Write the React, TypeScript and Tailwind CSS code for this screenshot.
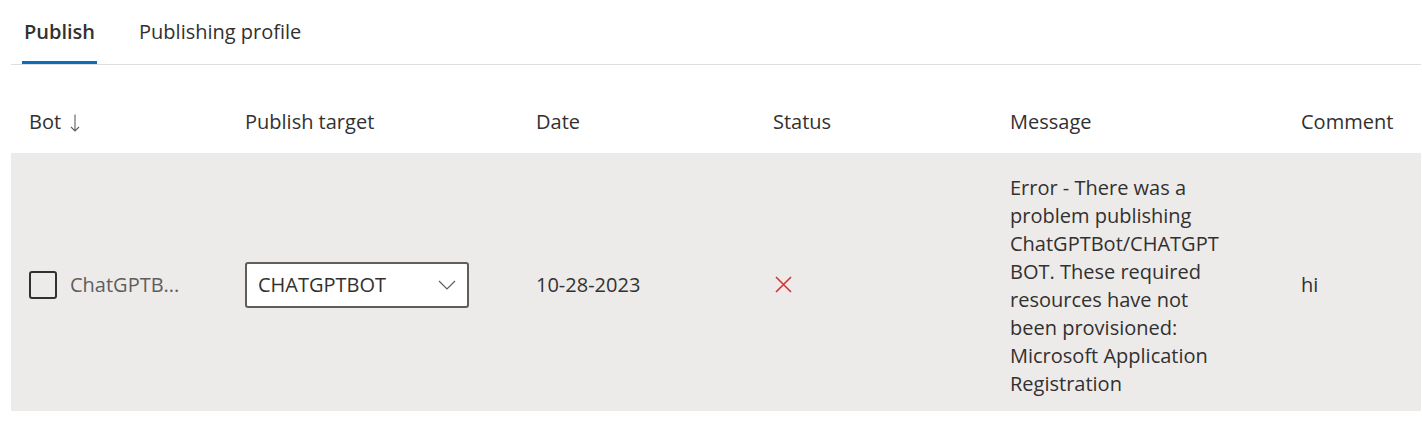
import React from 'react';

const font = { fontFamily: '"Open Sans", "Noto Sans", Arial, sans-serif' };

const cols = 'grid grid-cols-[216px_291px_237px_237px_291px_1fr]';

export default function App() {
  return (
    <div className="w-[1422px] h-[426px] bg-white text-[#323130]" style={font}>
      {/* Tabs */}
      <div className="ml-[11px] mr-px h-[65px] flex items-stretch border-b border-[#e1dfdd]">
        <div className="ml-[12px] flex flex-col justify-between">
          <div className="h-[61px] flex items-center pt-[3px] px-px text-[20px] font-semibold text-[#323130]">Publish</div>
          <div className="h-[3px] bg-[#0f6cbd] -mx-px" />
        </div>
        <div className="ml-[43px] h-[61px] flex items-center pt-[3px] text-[20px] text-[#323130]">Publishing profile</div>
      </div>

      {/* Table */}
      <div className="ml-[11px] mr-px mt-[25px]">
        <div className={`${cols} h-[63px] items-center text-[20px]`}>
          <div className="pl-[18px] flex items-center gap-[9px]">
            <span>Bot</span>
            <svg width="10" height="18" viewBox="0 0 10 18" fill="none" className="mt-[2px]">
              <path d="M5 0.5 V17 M1 13 L5 17 L9 13" stroke="#605e5c" strokeWidth="1.1" />
            </svg>
          </div>
          <div className="pl-[18px]">Publish target</div>
          <div className="pl-[18px]">Date</div>
          <div className="pl-[18px]">Status</div>
          <div className="pl-[18px]">Message</div>
          <div className="pl-[18px]">Comment</div>
        </div>

        <div className={`${cols} h-[258px] pt-[5px] items-center bg-[#edebe9] text-[20px]`}>
          <div className="pl-[18px] flex items-center gap-[13px]">
            <div className="w-[28px] h-[28px] border-2 border-[#323130] rounded-[3px] bg-transparent" />
            <span className="text-[#605e5c]">ChatGPTB...</span>
          </div>
          <div className="pl-[18px]">
            <div className="w-[224px] h-[46px] border-2 border-[#605e5c] rounded-[3px] bg-white flex items-center justify-between pl-[11px] pr-[11px]">
              <span className="text-[#323130]">CHATGPTBOT</span>
              <svg width="18" height="10" viewBox="0 0 18 10" fill="none">
                <path d="M1 1 L9 9 L17 1" stroke="#605e5c" strokeWidth="1.2" />
              </svg>
            </div>
          </div>
          <div className="pl-[18px] font-medium">10-28-2023</div>
          <div className="pl-[20px] flex items-center">
            <svg width="17" height="17" viewBox="0 0 17 17" fill="none">
              <path d="M1 1 L16 16 M16 1 L1 16" stroke="#d13438" strokeWidth="1.6" />
            </svg>
          </div>
          <div className="pl-[18px] pt-[3px]">
            <div className="w-[215px] leading-[28px]">
              Error - There was a problem publishing ChatGPTBot/CHATGPT BOT. These required resources have not been provisioned: Microsoft Application Registration
            </div>
          </div>
          <div className="pl-[18px] font-medium">hi</div>
        </div>
      </div>
    </div>
  );
}
